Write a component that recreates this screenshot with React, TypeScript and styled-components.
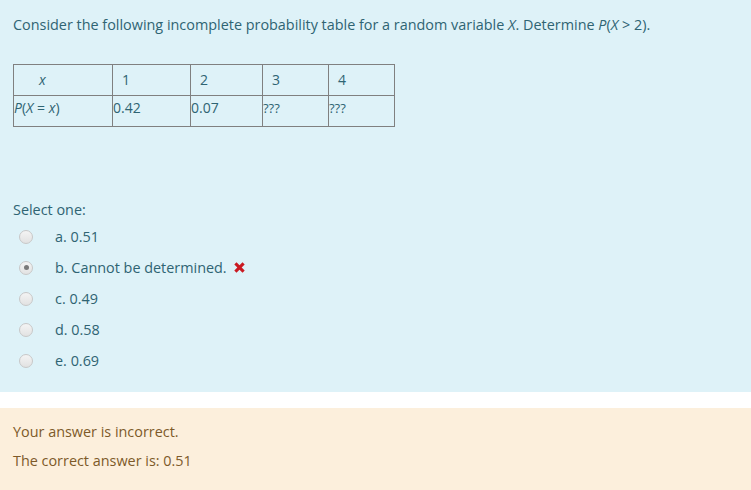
import styled, { createGlobalStyle } from 'styled-components';

const GlobalStyle = createGlobalStyle`
  html, body {
    margin: 0;
    padding: 0;
    background: #ffffff;
  }
  body {
    font-family: 'Open Sans', 'Noto Sans', sans-serif;
    font-size: 14px;
  }
`;

interface Choice {
  letter: string;
  text: string;
  checked?: boolean;
  wrong?: boolean;
}

const choices: Choice[] = [
  { letter: 'a', text: '0.51' },
  { letter: 'b', text: 'Cannot be determined.', checked: true, wrong: true },
  { letter: 'c', text: '0.49' },
  { letter: 'd', text: '0.58' },
  { letter: 'e', text: '0.69' },
];

const probs = ['0.42', '0.07', '???', '???'];
const colWidths = [99, 78, 72, 66, 66];

const App = () => {
  return (
    <Page>
      <GlobalStyle />
      <Formulation>
        <QuestionText>
          Consider the following incomplete probability table for a random variable <i>X</i>.
          Determine <i>P</i>(<i>X</i> &gt; 2).
        </QuestionText>

        <ProbTable>
          <colgroup>
            {colWidths.map((w, i) => (
              <col key={i} style={{ width: w }} />
            ))}
          </colgroup>
          <tbody>
            <Row>
              <HeadCell $first>
                <i>x</i>
              </HeadCell>
              {[1, 2, 3, 4].map((n) => (
                <HeadCell key={n}>{n}</HeadCell>
              ))}
            </Row>
            <Row>
              <ValueCell>
                <i>P</i>(<i>X</i> = <i>x</i>)
              </ValueCell>
              {probs.map((p, i) => (
                <ValueCell key={i} $unknown={p === '???'}>
                  {p}
                </ValueCell>
              ))}
            </Row>
          </tbody>
        </ProbTable>

        <Prompt>Select one:</Prompt>
        <Answers>
          {choices.map((c) => (
            <AnswerRow key={c.letter}>
              <Radio $checked={!!c.checked} />
              <Label>
                {c.letter}. {c.text}
                {c.wrong && (
                  <WrongIcon viewBox="0 0 12 12" aria-label="Incorrect">
                    <path d="M1.2 3.2 3.2 1.2 6 4 8.8 1.2 10.8 3.2 8 6 10.8 8.8 8.8 10.8 6 8 3.2 10.8 1.2 8.8 4 6Z" />
                  </WrongIcon>
                )}
              </Label>
            </AnswerRow>
          ))}
        </Answers>
      </Formulation>

      <Outcome>
        <FeedbackLine>Your answer is incorrect.</FeedbackLine>
        <FeedbackLine>The correct answer is: 0.51</FeedbackLine>
      </Outcome>
    </Page>
  );
};

export default App;

const Page = styled.div`
  display: flex;
  flex-direction: column;
  gap: 16px;
  width: 751px;
  height: 490px;
  overflow: hidden;
`;

const Formulation = styled.div`
  background: #def2f8;
  color: #2f6473;
  padding: 14px 13px 16px;
  line-height: 22px;
`;

const QuestionText = styled.p`
  margin: 0;
  font-size: 14.4px;
`;

const ProbTable = styled.table`
  margin-top: 28px;
  border-collapse: collapse;
  table-layout: fixed;
  width: 381px;
  border: 1px solid #333333;
  font-size: 14px;
`;

const Row = styled.tr`
  height: 31px;
`;

const HeadCell = styled.td<{ $first?: boolean }>`
  border: 1px solid #808080;
  padding: 0 0 0 ${({ $first }) => ($first ? '25px' : '9px')};
  vertical-align: middle;
  line-height: 18px;
`;

const ValueCell = styled.td<{ $unknown?: boolean }>`
  border: 1px solid #808080;
  padding: 2px 0 0 0;
  vertical-align: top;
  line-height: 20px;
  font-size: ${({ $unknown }) => ($unknown ? '13px' : '14px')};
`;

const Prompt = styled.div`
  margin-top: 72px;
  font-size: 14.4px;
`;

const Answers = styled.div`
  display: flex;
  flex-direction: column;
`;

const AnswerRow = styled.div`
  display: flex;
  align-items: center;
  height: 31px;
  padding-left: 6px;
`;

const Radio = styled.span<{ $checked: boolean }>`
  position: relative;
  width: 12px;
  height: 12px;
  border-radius: 50%;
  border: 1px solid #c8c8c8;
  background: linear-gradient(#f4f4f4, #e2e2e2);
  flex-shrink: 0;

  &::after {
    content: '';
    display: ${({ $checked }) => ($checked ? 'block' : 'none')};
    position: absolute;
    left: 3.5px;
    top: 3.5px;
    width: 5px;
    height: 5px;
    border-radius: 50%;
    background: #7a7a7a;
  }
`;

const Label = styled.span`
  display: inline-flex;
  align-items: center;
  margin-left: 22px;
  font-size: 14.4px;
`;

const WrongIcon = styled.svg`
  width: 13px;
  height: 13px;
  margin-left: 6px;
  fill: #ca1a22;
`;

const Outcome = styled.div`
  flex: 1;
  background: #fcefdc;
  color: #7d5a29;
  padding: 13px 13px;
  font-size: 14.4px;
  line-height: 22px;
`;

const FeedbackLine = styled.p`
  margin: 0 0 7px;
`;
